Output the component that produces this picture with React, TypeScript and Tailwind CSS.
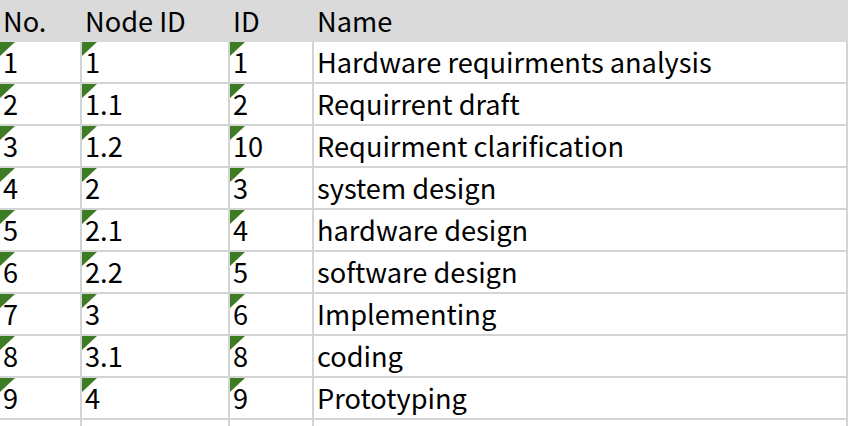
const rows = [
  ['1', '1', '1', 'Hardware requirments analysis'],
  ['2', '1.1', '2', 'Requirrent draft'],
  ['3', '1.2', '10', 'Requirment clarification'],
  ['4', '2', '3', 'system design'],
  ['5', '2.1', '4', 'hardware design'],
  ['6', '2.2', '5', 'software design'],
  ['7', '3', '6', 'Implementing'],
  ['8', '3.1', '8', 'coding'],
  ['9', '4', '9', 'Prototyping'],
];

const widths = ['w-[82px]', 'w-[148px]', 'w-[84px]', 'w-[534px]'];

function Cell({ text, width, flag }: { text: string; width: string; flag: boolean }) {
  return (
    <div className={`relative ${width} h-full flex items-center pl-[3px] border-r-2 border-[#d4d4d4] shrink-0`}>
      {flag && (
        <div className="absolute top-0 left-0 w-[15px] h-[14px] bg-[#3d7b24] [clip-path:polygon(0_0,100%_0,0_100%)]" />
      )}
      <span className="relative whitespace-nowrap">{text}</span>
    </div>
  );
}

export default function App() {
  return (
    <div
      className="w-[848px] h-[426px] overflow-hidden bg-white text-[27.2px] text-black leading-none"
      style={{ fontFamily: '"Noto Sans CJK SC", "Noto Sans", sans-serif' }}
    >
      {/* header */}
      <div className="flex h-[42px] bg-[#dadada]">
        {['No.', 'Node ID', 'ID', 'Name'].map((h, i) => (
          <div key={h} className={`${widths[i]} shrink-0 flex items-center pl-[3px]`}>
            {h}
          </div>
        ))}
      </div>

      {rows.map((r, ri) => (
        <div key={ri} className="flex h-[42px] border-b-2 border-[#d4d4d4]">
          {r.map((c, ci) => (
            <Cell key={ci} text={c} width={widths[ci]} flag={ci < 3} />
          ))}
        </div>
      ))}

      {/* partial next row */}
      <div className="flex h-[42px]">
        {widths.map((w, i) => (
          <div key={i} className={`${w} shrink-0 h-full border-r-2 border-[#d4d4d4]`} />
        ))}
      </div>
    </div>
  );
}
